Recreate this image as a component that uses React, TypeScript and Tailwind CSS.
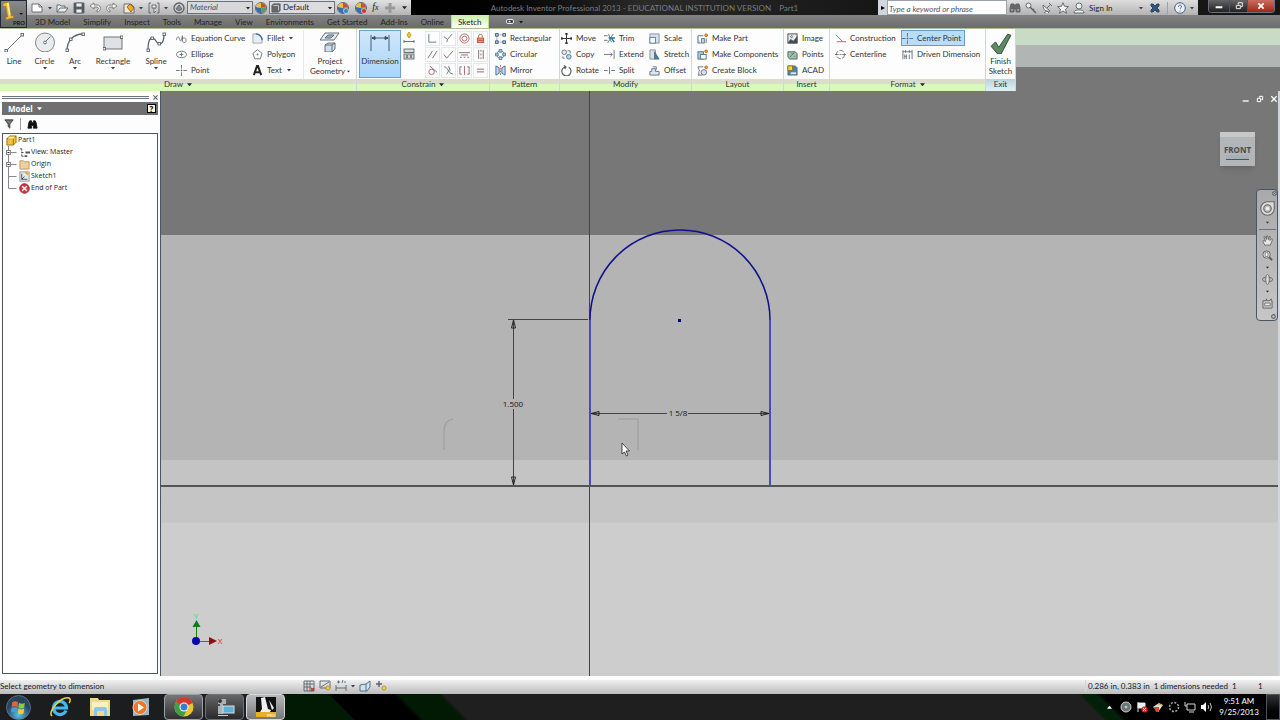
import React from 'react';

type IconProps = { children: React.ReactNode; className?: string; box?: string };

const Svg = ({ children, className = 'w-3 h-3', box = '0 0 12 12' }: IconProps) => (
  <svg viewBox={box} className={`shrink-0 ${className}`} fill="none" stroke="#59636a" strokeWidth=".9" aria-hidden="true">
    {children}
  </svg>
);

const Caret = ({ className = 'w-1 h-1 text-gray-700' }: { className?: string }) => (
  <svg viewBox="0 0 4 4" className={`shrink-0 ${className}`} fill="currentColor" aria-hidden="true">
    <path d="M0 1h4L2 3.4z" />
  </svg>
);

const icons = {
  line: <><path d="M2 19 18 3" /><rect x="1" y="17.500" width="2.500" height="2.500" fill="#fff" /><rect x="17" y="1.500" width="2.500" height="2.500" fill="#fff" /></>,
  circle: <><circle cx="10" cy="10.500" r="9.500" fill="#e9ebed" stroke="#777" /><path d="m10 10 5.500-5.500" /><circle cx="10" cy="10.500" r="1.400" fill="#fff" /></>,
  arc: <><path d="M2 19C2 9 8 2 18 2" strokeWidth="1.300" /><rect x="1" y="17" width="2.500" height="2.500" fill="#fff" /><rect x="17" y="1" width="2.500" height="2.500" fill="#fff" /><rect x="4.500" y="6" width="2.500" height="2.500" fill="#fff" /></>,
  rectangle: <><rect x="1" y="5" width="18" height="12" fill="#dfe1e4" stroke="#666" /><rect x="0" y="15.500" width="2.500" height="2.500" fill="#fff" /><rect x="17.500" y="4" width="2.500" height="2.500" fill="#fff" /></>,
  spline: <><path d="M2 18C2 4 7 4 10 9s8 4 8-7" strokeWidth="1.300" /><rect x="1" y="17" width="2.500" height="2.500" fill="#fff" /><rect x="5" y="5" width="2.500" height="2.500" fill="#fff" /><rect x="12" y="10.500" width="2.500" height="2.500" fill="#fff" /><rect x="17" y="1" width="2.500" height="2.500" fill="#fff" /></>,
  project: <><path d="M5 1h14l-5 7H0z" fill="#e4edf2" /><path d="M8 3h6l-3 3H5z" fill="#8fb6cf" /><path d="m5 13 3-2h7v6l-3 3H5z" fill="#cfe0ea" /><path d="M5 13h7v7M12 13l3-2" /></>,
  dimension: <path d="M1 3v16M19 3v16M2 6h16M2 6l3-1.500v3zM18 6l-3-1.500v3z" stroke="#3a4a60" fill="#3a4a60" />,
  finish: <path d="m1 13 4-4 3 5 8-12 3 1L10 20H7z" fill="#5f8a66" stroke="#2f5037" />,
};

const smallIcons = {
  equation: <path d="M0 8c2-6 3-4 4-1s2 2 3-4v6c1 2 4 2 4-1s-2-3-4-2" />,
  ellipse: <><ellipse cx="6" cy="6" rx="5.500" ry="3.500" /><path d="M6 4v4M4 6h4" /></>,
  point: <path d="M6 0v4M6 8v4M0 6h4M8 6h4M5 6h2M6 5v2" />,
  fillet: <><path d="M1 1h4c4 0 6 3 6 6v4H1z" fill="#e8eef2" stroke="#99a" /><path d="M4 1c4 0 7 3 7 7" stroke="#2b6ea5" strokeWidth="1.300" /></>,
  polygon: <><path d="m6 .8 5 3.900-2 6H3l-2-6z" /><path d="M5.500 5.500h1v1h-1z" /></>,
  text: <path d="M2 11 5.500 1h1L10 11M4 8h4" stroke="#222" strokeWidth="2.200" />,
  coincident: <path d="M2 1v9h8" />,
  collinear: <path d="m1 4 4 3 5-6M5 7l-1 3" />,
  concentric: <><circle cx="6" cy="6" r="5" stroke="#a55" /><circle cx="6" cy="6" r="2.700" stroke="#a55" /></>,
  fix: <><rect x="2.500" y="5.500" width="7" height="5" fill="#e0a070" stroke="#b54a3a" /><path d="M4 5V3c0-2 4-2 4 0v2M3 8h6" stroke="#b54a3a" /></>,
  parallel: <path d="m1 10 5-8M6 10l5-8" stroke="#755" />,
  perpendicular: <path d="m1 6 3 4 7-8" stroke="#755" />,
  horizontal: <path d="M0 4h12M2 6.500h8M1 9h2M5 9h2M9 9h2" stroke="#755" />,
  vertical: <path d="M4 1v10M9 1v10M6.500 1v2M6.500 5v2M6.500 9v2" stroke="#755" />,
  tangent: <><circle cx="5" cy="7.500" r="3" stroke="#a55" /><path d="m3 1 8 7" /></>,
  smooth: <path d="M1 2c5 0 3 6 10 8M4 10l3-5M6 1l2 5" />,
  symmetric: <><path d="M3 2H1v8h2M9 2h2v8H9" stroke="#755" /><path d="M6 1v10" stroke="#a55" /></>,
  equal: <path d="M2 4.500h8M2 7.500h8" stroke="#755" />,
  autoDim: <><path d="M1 8v3M11 8v3M1 9.500h10" /><path d="m6 0 2 3-2 3-2-3z" fill="#f3c742" stroke="#c99200" /></>,
  showCon: <><rect x="1" y="1" width="10" height="3.500" fill="#ddd" /><rect x="1" y="6" width="10" height="5" fill="#ddd" /><path d="m3 7 2 3M5 7l-2 3M7 7l2 3M9 7l-2 3" /></>,
  rectangular: <><path d="M3 2h6M3 10h6M2 3v6" stroke="#557" strokeDasharray="1 1" /><path d="M.5.500h3v3h-3zM8.500.500h3v3h-3zM.5 8.500h3v3h-3zM8.500 8.500h3v3h-3z" fill="#b9cddd" stroke="#2d4d6b" /></>,
  circular: <><circle cx="6" cy="6" r="4" stroke="#789" /><path d="M4.500.500h3v3h-3zM4.500 8.500h3v3h-3zM.5 4.500h3v3h-3zM8.500 4.500h3v3h-3z" fill="#a8c4d8" stroke="#4d7893" /></>,
  mirror: <><path d="M6 0v12" stroke="#a55" strokeDasharray="2 1" /><path d="M1 1v10l3.500-2V3zM11 1v10L7.500 9V3z" fill="#c9dcea" stroke="#2d5d8b" /></>,
  move: <path d="M6 0v12M0 6h12M4.500 1.500 6 0l1.500 1.500M4.500 10.500 6 12l1.500-1.500M1.500 4.500 0 6l1.500 1.500M10.500 4.500 12 6l-1.500 1.500" stroke="#333" strokeWidth="1.100" />,
  copy: <><circle cx="3.500" cy="3.500" r="2.500" fill="#e4ecf2" /><circle cx="8.500" cy="8.500" r="2.500" fill="#bcd5e6" stroke="#2d6d9b" /><path d="M7 2h3v3M2 8v2h2" /></>,
  rotate: <path d="M4.500 2a5 5 0 1 0 4 .5M3 .5l2.500 1.500L4 4.500" strokeWidth="1.300" />,
  trim: <><path d="M0 3h4M0 8h4M4 11 10 1M5 1l3 9" /><path d="M5 5.500h7M8 5l3 5" stroke="#2576a8" strokeWidth="1.600" /></>,
  extend: <path d="M0 6h9M7 4l2 2-2 2M11 1v10" />,
  split: <path d="M0 6h4M6 2v8M8 6h4" />,
  scale: <><rect x="1" y="1" width="10" height="10" fill="#d4dfe8" stroke="#789" /><rect x="1" y="5" width="6" height="6" fill="#fff" stroke="#4d7893" /></>,
  stretch: <><path d="M1 1h6v10H1z" fill="#d8e2ea" stroke="#789" /><path d="M6 3v8h5z" fill="#4682ae" /></>,
  offset: <><path d="M1 11V7h2V4h4v3h4v4z" fill="#dbe6ee" stroke="#567" /><path d="M4 2h4v3" /></>,
  makePart: <><path d="M1 3h6M1 3v8h3M5 6h3v5H5z" fill="#cfe0ec" stroke="#467" /><path d="M10 6v5" stroke="#467" /><circle cx="10" cy="2.500" r="1.500" fill="#ef9a3c" stroke="#b56414" /></>,
  makeComp: <><rect x="1" y="3" width="6" height="8" fill="#a7cbe0" stroke="#467" /><rect x="4" y="6" width="6" height="5" fill="#fff" stroke="#467" /><circle cx="10" cy="2.500" r="1.500" fill="#ef9a3c" stroke="#b56414" /></>,
  block: <><path d="M1 2h6M1 2l2 5M1 11h5M2 7v4" /><circle cx="7.500" cy="8" r="3" fill="#dde" /><circle cx="10" cy="2.500" r="1.500" fill="#ef9a3c" stroke="#b56414" /></>,
  image: <><rect x="1" y="1" width="10" height="10" fill="#e7edf1" stroke="#333" /><path d="m1 11 3-4 3 2 4-5v7z" fill="#444" /><circle cx="5" cy="4" r="1" /></>,
  points: <><path d="M1 3h8l2 2v6H3L1 9z" fill="#9fc0ae" stroke="#3e5d50" /><path d="m3 9 5-5M5 5h1M8 8h1" /></>,
  acad: <><path d="M1 1h8l2 2v8H1z" fill="#4f83a8" /><path d="M1 1h5v5H1z" fill="#f6d33b" stroke="#8a7410" /><path d="M4 8h6v2H4z" fill="#dfe8ee" stroke="none" /></>,
  construction: <><path d="m1 2 7 7" stroke="#b45" /><path d="M2 9.500h10" stroke="#b45" /></>,
  centerline: <><circle cx="6" cy="6" r="4.500" strokeDasharray="5 1.500" /><path d="M0 6h4M8 6h4M5 6h2" /></>,
  driven: <path d="M1 1v10M11 1v10M1 3h10M3 6v5M5 6v5M8 6v5M3 8h2M4 1v3M8 1v3" />,
};

const LargeButton = ({ icon, label, width, arrow }: { icon: React.ReactNode; label: string; width: string; arrow?: boolean }) => (
  <button type="button" className={`flex flex-col items-center pt-0.5 ${width}`}>
    <Svg className="w-5 h-5" box="0 0 20 20">{icon}</Svg>
    <span className="mt-1 leading-[10px]">{label}</span>
    {arrow && <Caret className="w-1 h-1 text-gray-700" />}
  </button>
);

type Item = { icon: React.ReactNode; label: string; arrow?: boolean; active?: boolean };

const ItemColumn = ({ items, width }: { items: Item[]; width: string }) => (
  <div className={`flex flex-col ${width}`}>
    {items.map((item) => (
      <button
        key={item.label}
        type="button"
        className={`flex h-4 items-center gap-1 whitespace-nowrap px-px ${item.active ? 'bg-[#b9dcf8] pr-1 outline outline-1 -outline-offset-1 outline-[#6b9cc8]' : ''}`}
      >
        <Svg className="w-[11px] h-[11px]">{item.icon}</Svg>
        <span>{item.label}</span>
        {item.arrow && <Caret className="w-1 h-1 ml-px text-gray-700" />}
      </button>
    ))}
  </div>
);

const Panel = ({ title, arrow, children, width, exit }: { title: string; arrow?: boolean; children: React.ReactNode; width: string; exit?: boolean }) => (
  <section className={`flex shrink-0 flex-col border-r border-gray-300 bg-[#fdfdfd] ${width}`}>
    <div className="flex h-[50px] pt-px">{children}</div>
    <div className={`flex h-3 items-start justify-center gap-1 leading-[11px] ${exit ? 'bg-linear-to-b from-[#b9d3dc] to-[#e0f2f6]' : 'bg-[linear-gradient(#dcdccb_5px,#d8fab9_5px)]'}`}>
      <h2>{title}</h2>
      {arrow && <Caret className="mt-[3px] w-[5px] h-[5px] text-gray-800" />}
    </div>
  </section>
);

const constraints: [string, React.ReactNode][] = [
  ['Coincident', smallIcons.coincident], ['Collinear', smallIcons.collinear], ['Concentric', smallIcons.concentric], ['Fix', smallIcons.fix],
  ['Parallel', smallIcons.parallel], ['Perpendicular', smallIcons.perpendicular], ['Horizontal', smallIcons.horizontal], ['Vertical', smallIcons.vertical],
  ['Tangent', smallIcons.tangent], ['Smooth', smallIcons.smooth], ['Symmetric', smallIcons.symmetric], ['Equal', smallIcons.equal],
];

const Ribbon = () => (
  <div className="flex h-[63px] shrink-0 border-t border-[#a9bf99] bg-[linear-gradient(#c9dac6_16px,#b1b5b4_16px,#b1b5b4_38px,#777_38px)] text-[#333]">
    <Panel title="Draw" arrow width="w-[357px]">
      <LargeButton icon={icons.line} label="Line" width="w-7" />
      <LargeButton icon={icons.circle} label="Circle" width="w-[33px]" arrow />
      <LargeButton icon={icons.arc} label="Arc" width="w-7" arrow />
      <LargeButton icon={icons.rectangle} label="Rectangle" width="w-12" arrow />
      <LargeButton icon={icons.spline} label="Spline" width="w-[38px]" arrow />
      <ItemColumn
        width="w-[76px]"
        items={[
          { icon: smallIcons.equation, label: 'Equation Curve' },
          { icon: smallIcons.ellipse, label: 'Ellipse' },
          { icon: smallIcons.point, label: 'Point' },
        ]}
      />
      <ItemColumn
        width="w-[52px]"
        items={[
          { icon: smallIcons.fillet, label: 'Fillet', arrow: true },
          { icon: smallIcons.polygon, label: 'Polygon' },
          { icon: smallIcons.text, label: 'Text', arrow: true },
        ]}
      />
      <button type="button" className="flex flex-1 flex-col items-center border-l border-gray-200 pt-0.5">
        <Svg className="w-5 h-5" box="0 0 20 20">{icons.project}</Svg>
        <span className="mt-1 leading-[10px]">Project</span>
        <span className="flex items-center gap-0.5 leading-[10px]">Geometry<Caret className="w-[3px] h-[3px]" /></span>
      </button>
    </Panel>
    <Panel title="Constrain" arrow width="w-[133px]">
      <button type="button" className="ml-0.5 flex h-12 w-[42px] flex-col items-center border border-[#6fa0cb] bg-linear-to-b from-[#cfe6fa] to-[#a9d6fb] pt-px">
        <Svg className="w-6 h-5" box="0 0 20 20">{icons.dimension}</Svg>
        <span className="mt-1 leading-[10px]">Dimension</span>
      </button>
      <div className="ml-0.5 flex w-[21px] flex-col gap-1 pt-0.5">
        <button type="button" aria-label="Automatic dimensions" className="w-3"><Svg>{smallIcons.autoDim}</Svg></button>
        <button type="button" aria-label="Show constraints" className="w-3"><Svg>{smallIcons.showCon}</Svg></button>
      </div>
      <div className="grid grid-cols-4">
        {constraints.map(([name, icon]) => (
          <button key={name} type="button" aria-label={name} className="flex h-4 w-4 items-center justify-center">
            <span className="flex h-[15px] w-[15px] items-center justify-center border border-gray-200"><Svg className="w-[11px] h-[11px]">{icon}</Svg></span>
          </button>
        ))}
      </div>
    </Panel>
    <Panel title="Pattern" width="w-[70px]">
      <ItemColumn
        width="ml-1"
        items={[
          { icon: smallIcons.rectangular, label: 'Rectangular' },
          { icon: smallIcons.circular, label: 'Circular' },
          { icon: smallIcons.mirror, label: 'Mirror' },
        ]}
      />
    </Panel>
    <Panel title="Modify" width="w-[132px]">
      <ItemColumn
        width="w-[43px]"
        items={[
          { icon: smallIcons.move, label: 'Move' },
          { icon: smallIcons.copy, label: 'Copy' },
          { icon: smallIcons.rotate, label: 'Rotate' },
        ]}
      />
      <ItemColumn
        width="w-[45px]"
        items={[
          { icon: smallIcons.trim, label: 'Trim' },
          { icon: smallIcons.extend, label: 'Extend' },
          { icon: smallIcons.split, label: 'Split' },
        ]}
      />
      <ItemColumn
        width="flex-1"
        items={[
          { icon: smallIcons.scale, label: 'Scale' },
          { icon: smallIcons.stretch, label: 'Stretch' },
          { icon: smallIcons.offset, label: 'Offset' },
        ]}
      />
    </Panel>
    <Panel title="Layout" width="w-[92px]">
      <ItemColumn
        width="ml-1"
        items={[
          { icon: smallIcons.makePart, label: 'Make Part' },
          { icon: smallIcons.makeComp, label: 'Make Components' },
          { icon: smallIcons.block, label: 'Create Block' },
        ]}
      />
    </Panel>
    <Panel title="Insert" width="w-[46px]">
      <ItemColumn
        width="ml-0.5"
        items={[
          { icon: smallIcons.image, label: 'Image' },
          { icon: smallIcons.points, label: 'Points' },
          { icon: smallIcons.acad, label: 'ACAD' },
        ]}
      />
    </Panel>
    <Panel title="Format" arrow width="w-[156px]">
      <ItemColumn
        width="ml-1 w-[67px]"
        items={[
          { icon: smallIcons.construction, label: 'Construction' },
          { icon: smallIcons.centerline, label: 'Centerline' },
        ]}
      />
      <ItemColumn
        width="items-start"
        items={[
          { icon: smallIcons.point, label: 'Center Point', active: true },
          { icon: smallIcons.driven, label: 'Driven Dimension' },
        ]}
      />
    </Panel>
    <Panel title="Exit" width="w-[30px]" exit>
      <button type="button" className="flex flex-1 flex-col items-center pt-0.5">
        <Svg className="w-[22px] h-[22px]" box="0 0 20 20">{icons.finish}</Svg>
        <span className="mt-0.5 leading-[10px]">Finish</span>
        <span className="leading-[10px]">Sketch</span>
      </button>
    </Panel>
  </div>
);

const tabs = ['3D Model', 'Simplify', 'Inspect', 'Tools', 'Manage', 'View', 'Environments', 'Get Started', 'Add-Ins', 'Online', 'Sketch'];

const ColorWheel = ({ mark }: { mark?: string }) => (
  <Svg>
    <circle cx="6" cy="6" r="5.500" fill="#e8e2d0" stroke="#556" />
    <path d="M6 6 1 4a5 5 0 0 1 5-3z" fill="#e2c23a" stroke="none" />
    <path d="M6 6V1a5 5 0 0 1 5 4z" fill="#c94d3f" stroke="none" />
    <path d="m6 6 5-1a5 5 0 0 1-4 6z" fill="#57a05a" stroke="none" />
    <path d="m6 6 1 5a5 5 0 0 1-6-6z" fill="#3b6cb3" stroke="none" />
    {mark && <circle cx="9" cy="9" r="2.500" fill={mark} stroke="#fff" strokeWidth=".5" />}
  </Svg>
);

const QuickAccess = () => (
  <div className="flex h-[15px] w-[384px] shrink-0 items-center bg-linear-to-b from-[#e2e2e2] to-[#b4b4b4] pl-1">
    <div className="flex w-[156px] shrink-0 items-center justify-between pr-0.5">
      <button type="button" aria-label="New"><Svg><path d="M1 2h7l3 3v5H1z" fill="#fff" /><path d="M8 2v3h3" /></Svg></button>
      <Caret />
      <button type="button" aria-label="Open"><Svg><path d="M1 10V3h3l1 1h4v2M1 10l3-4h8l-3 4z" fill="#eee" /></Svg></button>
      <button type="button" aria-label="Save"><Svg><path d="M1 1h10v10H1z" fill="#555" /><path d="M3 1h6v4H3zM3 7h6v4H3z" fill="#eee" /></Svg></button>
      <button type="button" aria-label="Undo"><Svg><path d="M5 1 1 4l4 3V5h3c2 0 2 3 0 3v2c4 0 5-7 0-7H5z" fill="#f5f5f5" stroke="#777" /></Svg></button>
      <button type="button" aria-label="Redo"><Svg><path d="m7 1 4 3-4 3V5H4c-2 0-2 3 0 3v2c-4 0-5-7 0-7h3z" fill="#f5f5f5" stroke="#777" /></Svg></button>
      <button type="button" aria-label="Update"><Svg><path d="M1 2h7l3 3v6H1z" fill="#f2ead4" /><path d="m4 5 3-3 4 4-3 4z" fill="#f0a830" stroke="#9a5e10" /></Svg></button>
      <Caret />
      <button type="button" aria-label="Select"><Svg><path d="M3 1H1v10h2M9 1h2v10H9" /><path d="M4 3h4v3H4zM6 6v5l2-2" fill="#eee" /></Svg></button>
      <Caret />
      <button type="button" aria-label="Settings"><Svg><circle cx="6" cy="6" r="5" fill="#ccc" strokeWidth="1.300" /><path d="m3 7 3-4 3 4-3 2z" fill="#888" /></Svg></button>
    </div>
    <div className="relative flex h-[13px] w-[66px] shrink-0 items-center border border-gray-500 bg-[#d8d8d8]">
      <select aria-label="Material" className="h-full w-full appearance-none pl-0.5 text-[8px] leading-[11px] italic text-gray-600">
        <option>Material</option>
      </select>
      <Caret className="pointer-events-none absolute right-0.5 w-1 h-1" />
    </div>
    <div className="ml-0.5"><ColorWheel /></div>
    <div className="relative ml-0.5 flex h-[13px] w-[66px] shrink-0 items-center border border-gray-500 bg-[#dcdcdc]">
      <Svg className="ml-px w-[10px] h-[10px]"><path d="m1 3 2-2h8v8l-2 2H1z" fill="#666" /><path d="M3 3h6v6" stroke="#ddd" /></Svg>
      <select aria-label="Appearance" className="h-full w-full appearance-none pl-0.5 text-[8px] leading-[11px]">
        <option>Default</option>
      </select>
      <Caret className="pointer-events-none absolute right-0.5 w-1 h-1" />
    </div>
    <div className="ml-0.5 flex w-[70px] items-center justify-between">
      <button type="button" aria-label="Adjust"><ColorWheel mark="#3b82c4" /></button>
      <button type="button" aria-label="Clear"><ColorWheel mark="#c33" /></button>
      <button type="button" aria-label="Parameters" className="font-['Liberation_Serif',serif] text-[10px] italic leading-3">f<span className="text-[8px]">x</span></button>
      <Svg><path d="M6 1v10M1 6h10" stroke="#999" strokeWidth="3" /></Svg>
      <Caret className="w-[5px] h-[5px]" />
    </div>
  </div>
);

const TitleRight = () => (
  <div className="flex h-[15px] w-[402px] shrink-0">
    <button type="button" aria-label="Collapse search" className="flex w-[9px] items-center justify-center bg-gray-300">
      <svg viewBox="0 0 4 4" className="h-1.5 w-1"><path d="M0 0v4l4-2z" /></svg>
    </button>
    <input aria-label="Search" placeholder="Type a keyword or phrase" className="w-[120px] border border-gray-400 bg-white px-px pt-0.5 text-[8px] italic placeholder:text-gray-600" />
    <div className="flex w-[191px] items-center gap-1 bg-linear-to-b from-[#dedede] to-[#b3b3b3] pl-0.5 pr-1">
      <Svg><path d="M1 10V6l1-4h3l1 3 1-3h3l1 4v4H7V7H5v3z" fill="#666" /><path d="M3 7v2M9 7v2" stroke="#ddd" /></Svg>
      <Svg><circle cx="3.500" cy="3.500" r="2.500" fill="#eee" /><path d="m5 5 6 6M8 8l1-1" strokeWidth="1.500" /></Svg>
      <Svg><path d="M2 3c0 5 3 7 7 6zM6 6l4-4M3 11l3-2 2 2M8 1l3 3" fill="#eee" /></Svg>
      <Svg><path d="m6 .7 1.500 3.600 4 .3-3 2.600 1 4L6 9l-3.500 2.200 1-4-3-2.600 4-.3z" fill="#f4f4f4" /></Svg>
      <Svg><circle cx="6" cy="4" r="3" fill="#eee" /><path d="M1 11c0-3 3-3 5-3s5 0 5 3z" fill="#eee" /></Svg>
      <button type="button" className="whitespace-nowrap">Sign In</button>
      <span className="flex-1" />
      <Caret />
      <Svg className="ml-0.5 w-3 h-3"><path d="M2 2h2l2 2 2-2h2v2L8 6l2 2v2H8L6 8l-2 2H2V8l2-2-2-2z" fill="#35547d" stroke="#243b5c" /></Svg>
      <span className="mx-0.5 h-3 border-l border-gray-400" />
      <Svg><circle cx="6" cy="6" r="5.300" fill="#eef2f8" stroke="#35547d" /><path d="M4.500 5c0-3 3.500-2 3 0-.3 1-1.500 1-1.500 2M6 8.500v1" stroke="#35547d" /></Svg>
      <Caret />
    </div>
    <div className="ml-2.5 flex h-[13px] w-[67px] overflow-hidden rounded-b border border-t-0 border-gray-500">
      <button type="button" aria-label="Minimize" className="flex w-[20px] items-center justify-center bg-linear-to-b from-[#666] to-[#222]"><Svg className="w-2 h-2"><path d="M1 8h10" stroke="#fff" strokeWidth="3" /></Svg></button>
      <button type="button" aria-label="Restore" className="flex w-[18px] items-center justify-center border-l border-gray-600 bg-linear-to-b from-[#666] to-[#222]"><Svg className="w-2 h-2"><path d="M2 5h6v5H2zM5 4V1h6v6H9" stroke="#eee" strokeWidth="1.500" /></Svg></button>
      <button type="button" aria-label="Close" className="flex flex-1 items-center justify-center border-l border-gray-600 bg-linear-to-b from-[#c76d60] to-[#a32214]"><Svg className="w-2 h-2"><path d="m2 2 8 8M10 2l-8 8" stroke="#fff" strokeWidth="2.500" /></Svg></button>
    </div>
  </div>
);

const Header = () => (
  <header className="flex h-7 shrink-0 bg-[#737373]">
    <button type="button" aria-label="Application menu" className="flex w-[27px] items-end justify-end border border-gray-800 bg-linear-to-b from-[#8a8a8a] to-[#666]">
      <svg viewBox="0 0 26 26" className="h-[26px] w-[26px]">
        <path d="m2 2 6-1.500L10.500 15l2.500-.5v2.500l-8 2v-2.500l2-.5L5 5 2.500 5.500z" fill="#f0bd3c" stroke="#a87812" strokeWidth=".6" />
        <path d="m6 2 2-1 2 13-1.500.5z" fill="#fbe7a0" />
        <path d="M19 12h4l-2 2z" fill="#111" />
        <text x="12.500" y="24.500" fontSize="6" fontWeight="700" fill="#151515">PRO</text>
      </svg>
    </button>
    <div className="flex min-w-0 flex-1 flex-col">
      <div className="flex h-[15px] bg-[#161616]">
        <QuickAccess />
        <h1 className="flex min-w-0 flex-1 items-center justify-center overflow-hidden whitespace-pre bg-linear-to-r from-black via-[#2a2a2a] to-[#161616] text-[#7c7c7c]">
          {'Autodesk Inventor Professional 2013 - EDUCATIONAL INSTITUTION VERSION    Part1'}
        </h1>
        <TitleRight />
      </div>
      <nav className="flex h-[13px] items-center gap-px bg-linear-to-b from-[#828282] to-[#6c6c6c] pl-0.5">
        {tabs.map((tab) => (
          <button
            key={tab}
            type="button"
            className={`h-full px-1.5 leading-3 whitespace-nowrap ${tab === 'Sketch' ? 'border-x border-[#b8e08e] bg-linear-to-b from-[#c9f0a4] to-white' : ''}`}
          >
            {tab}
          </button>
        ))}
        <span className="ml-4 flex h-[5px] w-2 items-center justify-center rounded-xs border border-gray-200 bg-gray-700"><Caret className="h-[3px] w-[3px] rotate-180 text-white" /></span>
        <Caret className="ml-1 w-1 h-1 text-gray-900" />
      </nav>
    </div>
  </header>
);

const treeItems = [
  {
    label: 'View: Master', expand: true,
    icon: <><path d="M1 2h3M3 2v8M3 6h3M3 10h3" stroke="#333" strokeDasharray="2 1" /><path d="M7 5h5v2H7zM6 9h3v2H6z" fill="#555" stroke="none" /></>,
  },
  { label: 'Origin', expand: true, icon: <path d="M1 3V2h4l1 1h5v8H1z" fill="#edcfa0" stroke="#b98d58" /> },
  { label: 'Sketch1', icon: <><rect x="1" y="1" width="10" height="10" fill="#e8e8e8" stroke="#888" /><path d="M3 3v6h6M3 9l3-3" stroke="#223a5c" /><path d="m7 2 2 2 1-1-2-2z" fill="#f0b429" stroke="#d99a10" /></> },
  { label: 'End of Part', last: true, icon: <><circle cx="6" cy="6" r="5.200" fill="#cf3a45" stroke="#8e1822" /><path d="m3.500 3.500 5 5M8.500 3.500l-5 5" stroke="#fff" strokeWidth="1.500" /></> },
];

const ModelPanel = () => (
  <aside className="flex w-[161px] shrink-0 flex-col border-r border-gray-600 bg-[#fdfdfd] px-0.5 pb-0.5">
    <div className="flex h-[11px] items-center gap-1 pt-px">
      <span className="h-[3px] flex-1 border-y border-gray-500" />
      <button type="button" aria-label="Close panel"><Svg className="w-[5px] h-[5px]"><path d="m1 1 10 10M11 1 1 11" strokeWidth="2.500" /></Svg></button>
    </div>
    <div className="flex h-[13px] items-center gap-1 bg-[#707070] pl-1.5 pr-0.5 font-['Open_Sans',sans-serif] font-bold text-white">
      <h2>Model</h2>
      <Caret className="w-[5px] h-[5px]" />
      <button type="button" aria-label="Help" className="ml-auto flex h-[9px] w-[9px] items-center justify-center border border-black bg-[#fffbe0] text-[8px] leading-none text-black">?</button>
    </div>
    <div className="flex h-[18px] items-center gap-1.5 pl-0.5">
      <button type="button" aria-label="Filter"><Svg className="w-[10px] h-[10px]"><path d="M1 1h10L7 6v5L5 9V6z" fill="#777" stroke="#222" /></Svg></button>
      <span className="h-3 border-l border-gray-400" />
      <button type="button" aria-label="Find"><Svg className="w-[11px] h-[11px]"><path d="m1 10 1-6 1-2h2v2h2V2h2l1 2 1 6H7V7H5v3z" fill="#111" stroke="#111" /></Svg></button>
    </div>
    <ul className="flex-1 border border-gray-600 bg-white pl-0.5 font-['Open_Sans','Noto_Sans',sans-serif] text-[7px]">
      <li className="flex h-3 items-center gap-px">
        <Svg className="ml-px h-[11px] w-[11px]"><path d="m1 4 3-3h7v7l-3 3H1z" fill="#f5c23a" stroke="#8a640c" /><path d="M1 4h7v7M8 4l3-3" stroke="#8a640c" /><path d="m2 4 2-2h6L8 4z" fill="#fdeeb0" stroke="none" /></Svg>
        Part1
      </li>
      {treeItems.map((item) => (
        <li key={item.label} className="flex h-3 items-center gap-px">
          <svg viewBox="0 0 13 12" className="h-3 w-[13px] shrink-0" fill="none" stroke="#888">
            <path d={item.last ? 'M3.500 0v6.500h8' : 'M3.500 0v12M3.500 6.500h8'} />
            {item.expand && <><rect x="1.500" y="4.500" width="4" height="4" fill="#fff" stroke="#888" /><path d="M2.500 6.500h2" stroke="#222" /></>}
          </svg>
          <Svg className="h-[11px] w-[11px]">{item.icon}</Svg>
          {item.label}
        </li>
      ))}
    </ul>
  </aside>
);

const Drawing = () => (
  <svg className="h-full w-full font-['Open_Sans','Noto_Sans',sans-serif]" fill="none" stroke="#222" aria-label="Sketch geometry">
    <path d="M428.500 0v600" stroke="#444" />
    <path d="M0 395h4000" stroke="#555" strokeWidth="2" />
    {/* arched profile */}
    <path d="M429 394V229M609 394V229" stroke="#4a4ab8" strokeWidth="2" />
    <path d="M429 229a90 90 0 0 1 180 0" stroke="#10108c" strokeWidth="1.500" />
    <rect x="517" y="228" width="3" height="3" fill="#00008b" stroke="none" />
    {/* height dimension */}
    <path d="M347 228.500h80M352.500 229v79M352.500 318v76" stroke="#444" />
    <path d="M352.500 229l-2 8h4zM352.500 394l-2-8h4z" />
    <text x="352" y="316" fontSize="8" textAnchor="middle" fill="#111" stroke="none">1.500</text>
    {/* width dimension */}
    <path d="M430 322.500h76M527 322.500h81" stroke="#444" />
    <path d="M430 322.500l8-2v4zM608 322.500l-8-2v4z" />
    <text x="517" y="325" fontSize="8" textAnchor="middle" fill="#111" stroke="none">1 5/8</text>
    <path d="M283 359v-20q0-9 9-11M457 328h20v31" stroke="#a2a2a2" strokeWidth="1.500" />
    <path d="M461 352v11l2.500-2 2 4 1.500-1-2-4h3.500z" fill="#fff" strokeWidth=".8" />
    {/* axis triad */}
    <path d="M35.500 550v-20" stroke="#157a15" />
    <path d="M35 550.500h14" stroke="#c33" />
    <path d="M35.500 529l-4 7h8z" fill="#0c7d20" stroke="none" />
    <path d="M56 550l-8-4v8z" fill="#8c0f14" stroke="none" />
    <circle cx="35" cy="550" r="4" fill="#0808b0" stroke="none" />
    <text x="35" y="528" fontSize="8" textAnchor="middle" fill="#3be03b" stroke="none">Y</text>
    <text x="59" y="553" fontSize="8" textAnchor="middle" fill="#e02828" stroke="none">X</text>
  </svg>
);

const NavBar = () => (
  <div className="absolute right-0 top-[98px] flex h-[132px] w-[22px] flex-col items-center justify-between rounded-sm border border-gray-600 bg-linear-to-b from-[#a9a9a9] to-[#c6c6c6] py-px">
    <Svg className="h-[5px] w-[5px] self-end"><circle cx="6" cy="6" r="5" strokeWidth="2" /><path d="m3 3 6 6M9 3 3 9" strokeWidth="2" /></Svg>
    <button type="button" aria-label="Navigation wheel"><Svg className="h-[15px] w-[15px]"><path d="M6 .6h5.400V6A5.400 5.400 0 1 1 6 .6z" fill="#ddd" stroke="#666" /><circle cx="6" cy="6" r="3" fill="#bbb" stroke="#666" /><circle cx="6" cy="6" r="1.500" fill="#eee" stroke="none" /></Svg></button>
    <Caret className="h-[3px] w-[3px]" />
    <span className="w-[17px] border-t border-gray-500" />
    <button type="button" aria-label="Pan"><Svg className="h-[11px] w-[11px]"><path d="M3 11 .8 6.500 2 6l2 1L2 2l1-.5L5 5l0-4h1l1 4 1-3.500 1 .3L8.500 6 11 4l.6.8L9 11z" fill="#e6e6e6" stroke="#555" strokeWidth=".8" /></Svg></button>
    <button type="button" aria-label="Zoom"><Svg className="h-[11px] w-[11px]"><circle cx="5" cy="5" r="4" fill="#ddd" stroke="#555" /><path d="M3.500 3h3v4h-3z" fill="#fff" stroke="#555" strokeWidth=".7" /><path d="m8 8 3 3" stroke="#555" strokeWidth="2" /></Svg></button>
    <Caret className="h-[3px] w-[3px]" />
    <button type="button" aria-label="Orbit"><Svg className="h-[11px] w-[11px]"><ellipse cx="6" cy="6" rx="5.500" ry="2.300" stroke="#555" /><ellipse cx="6" cy="6" rx="2" ry="5.500" fill="#ddd" stroke="#555" /></Svg></button>
    <Caret className="h-[3px] w-[3px]" />
    <button type="button" aria-label="Look at"><Svg className="h-[11px] w-[11px]"><path d="M1 3h3l1-2v2h3l2-2v2h1v8H1z" fill="#ccc" stroke="#555" /><path d="M3 5.500h6v3H3z" fill="#eee" stroke="#666" /></Svg></button>
    <Svg className="mr-px h-[5px] w-[5px] self-end"><circle cx="6" cy="6" r="4.500" strokeWidth="2.500" /></Svg>
  </div>
);

const Canvas = () => (
  <main className="relative min-w-0 flex-1 overflow-hidden border-r-2 border-gray-300 bg-[linear-gradient(#777_144px,#b4b4b4_144px,#b4b4b4_369px,#c4c4c4_369px,#c5c5c5_431px,#cdcdcd_432px)]">
    <div className="absolute inset-0"><Drawing /></div>
    <div className="absolute right-0 top-1 flex gap-1.5">
      <button type="button" aria-label="Minimize document"><Svg className="h-2 w-2"><path d="M1 9h9" stroke="#fff" strokeWidth="2" /></Svg></button>
      <button type="button" aria-label="Restore document"><Svg className="h-2 w-2"><path d="M2 5h5v5H2zM5 4V2h5v5H8" stroke="#fff" strokeWidth="1.500" /></Svg></button>
      <button type="button" aria-label="Close document"><Svg className="h-2 w-2"><path d="m2 2 8 8M10 2l-8 8" stroke="#fff" strokeWidth="2" /></Svg></button>
    </div>
    <button type="button" className="absolute right-[23px] top-[41px] flex h-[34px] w-[35px] flex-col items-center border-t-[5px] border-[#c8c8c8] bg-[#b3b5b6] pt-2 font-['Open_Sans',sans-serif] text-[8px] font-bold leading-[10px] text-[#4b4b4b] shadow-md">
      FRONT
      <span className="h-[5px] w-[23px] border-b border-gray-600 bg-[#a8b0b5]" />
    </button>
    <NavBar />
  </main>
);

const StatusBar = () => (
  <footer className="flex h-[18px] shrink-0 items-start border-t-4 border-white bg-linear-to-b from-[#f0f0f0] to-[#bcbcbc] leading-3 text-gray-900">
    <span className="w-[303px]">Select geometry to dimension</span>
    <div className="flex items-center gap-1">
      <Svg><path d="M1 1h10v10H1zM1 4h10M1 7h7M4 1v10M7 1v10" /><path d="m8 8 3 3M11 8l-3 3" stroke="#c33" strokeWidth="1.500" /></Svg>
      <Svg><path d="M1 1h10v7H1zM2 7l8-5" /><circle cx="9" cy="8" r="2" fill="#f5cf4a" stroke="#b98d10" /></Svg>
      <Svg><path d="M1 5v6M11 5v6M1 8h10M2 2h3M3.500.500v3M7 3l1-3M9 2h2" /></Svg>
      <Caret />
      <Svg><path d="m1 5 6-1 4-3v6l-3 4H1z" fill="#cfe3ee" stroke="#467" /><path d="M7 4v7" stroke="#467" /></Svg>
      <Svg><path d="M4 1v6M1 4h6" strokeWidth="1.400" /><circle cx="9" cy="8" r="2" fill="#f5cf4a" stroke="#b98d10" /></Svg>
    </div>
    <div className="ml-auto flex whitespace-nowrap">
      <span className="border-l border-gray-300 pl-0.5">0.286 in, 0.383 in</span>
      <span className="ml-1 mr-1">1 dimensions needed</span>
      <span className="w-[26px]">1</span>
      <span className="w-[22px]">1</span>
    </div>
  </footer>
);

const Taskbar = () => (
  <div className="flex h-[26px] shrink-0 items-center bg-[linear-gradient(45deg,#1b1d1e_200px,#021a04_200px,#021a04_250px,#000_252px,#000_296px,#021a04_300px,#021a04_328px,#1f1f1f_332px,#1f1f1f_780px,#03200a_783px,#03200a_793px,#000_797px)] text-white">
    <button type="button" aria-label="Start" className="ml-1.5 w-[25px]">
      <svg viewBox="0 0 24 24" className="h-[25px] w-[25px]">
        <defs><radialGradient id="orb" cx=".5" cy=".8"><stop offset="0" stopColor="#5cc3e8" /><stop offset="1" stopColor="#27435f" /></radialGradient></defs>
        <circle cx="12" cy="12" r="11.500" fill="url(#orb)" stroke="#6d8495" strokeWidth=".7" />
        <path d="M6 7q3-2 5.500 0L11 11.500q-3-1.500-5.500 0z" fill="#e8622c" />
        <path d="M12.500 7.500q3 2 5.500 0l-.5 4.500q-3 2-5.500 0z" fill="#8fc93e" />
        <path d="M5.300 12.500q3-1.500 5.500 0l-.5 4.500q-3-2-5.500 0z" fill="#3fa3df" />
        <path d="M11.900 13q3 2 5.500 0l-.5 4.500q-3 2-5.500 0z" fill="#f8c931" />
      </svg>
    </button>
    <button type="button" aria-label="Internet Explorer" className="ml-[18px]">
      <svg viewBox="0 0 22 22" className="h-[22px] w-[22px]" fill="none">
        <path d="M17 14.500A6.500 6.500 0 1 1 17.500 12H6" stroke="#45b8ee" strokeWidth="3.200" />
        <path d="M3 20C-2 16 12 0 20 2c2 1 1 4 0 5" stroke="#f3cf3c" strokeWidth="1.500" />
      </svg>
    </button>
    <button type="button" aria-label="Explorer" className="ml-[18px]">
      <svg viewBox="0 0 22 22" className="h-[22px] w-[22px]"><path d="M1 4V2h8l1 2h11v16H1z" fill="#efda8c" /><path d="M3 6h16v8H3z" fill="#faf0c0" /><path d="M5 20v-7q0-2 2-2h9q2 0 2 2v7h-3v-5H8v5z" fill="#8fc6e2" /></svg>
    </button>
    <button type="button" aria-label="Media Player" className="ml-5">
      <svg viewBox="0 0 20 20" className="h-5 w-5"><path d="M2 3 18 1v17L2 19z" fill="#8db9d3" /><circle cx="9" cy="10.500" r="7" fill="#e8792d" stroke="#f8d0a8" /><path d="M7 6.500v8l6-4z" fill="#fff" /></svg>
    </button>
    <button type="button" aria-label="Chrome" className="ml-[13px] flex h-[26px] w-[39px] items-center justify-center rounded-sm border border-gray-400 bg-linear-to-b from-[#777] to-[#303030]">
      <svg viewBox="0 0 20 20" className="h-5 w-5">
        <circle cx="10" cy="10" r="9.500" fill="#e8c62e" />
        <path d="M10 10 1.800 5.200A9.500 9.500 0 0 1 18.800 6z" fill="#d8382c" />
        <path d="M10 10 1.800 5.200A9.500 9.500 0 0 0 9.500 19.500L14 11z" fill="#3f9e49" />
        <circle cx="10" cy="10" r="4.500" fill="#fff" /><circle cx="10" cy="10" r="3.500" fill="#3c7ccc" />
      </svg>
    </button>
    <button type="button" aria-label="Recorder" className="ml-0.5 flex h-[26px] w-[39px] items-center justify-center rounded-sm border border-gray-500 bg-linear-to-b from-[#666] to-[#2a2a2a]">
      <svg viewBox="0 0 20 20" className="h-5 w-5"><path d="M3 2h8v5H8v10H3V9h2V7H3z" fill="#aab3b8" /><circle cx="5" cy="4" r="2" fill="#333" /><rect x="8" y="9" width="11" height="7" fill="#5bb0da" stroke="#ddd" /><path d="M3 18h10v1H3z" fill="#ccc" /></svg>
    </button>
    <button type="button" aria-label="Inventor" className="ml-0.5 flex h-[26px] w-[39px] items-center justify-center rounded-sm border border-gray-300 bg-linear-to-b from-[#bbb] to-[#777]">
      <svg viewBox="0 0 20 20" className="h-5 w-5"><path d="M0 0h20v15H0z" fill="#111" /><path d="M0 15h20v5H0z" fill="#e8b023" /><path d="m5 1 4-1 3 12 3 1-1 2H4l2-3zM13 3l5 8-2 2z" fill="#eee" /><text x="11" y="19.500" fontSize="4" fill="#fff">PRO</text></svg>
    </button>
    <div className="ml-auto flex items-center gap-1">
      <Svg className="h-[5px] w-[5px] mr-1"><path d="M0 9 6 2l6 7z" fill="#fff" stroke="none" /></Svg>
      <Svg><circle cx="6" cy="6" r="5" fill="#6c7774" stroke="#ddd" /><circle cx="6" cy="6" r="2" fill="#bcc" /></Svg>
      <Svg><path d="M2 1v10M2 2h7v5H2z" stroke="#eee" fill="#eee" /><circle cx="8.500" cy="8.500" r="3" fill="#d22" stroke="none" /><path d="m7 7 3 3M10 7l-3 3" stroke="#fff" /></Svg>
      <Svg><path d="m1 6 6-4 4 2-5 7z" fill="#ddd" stroke="none" /><path d="M2 6h5v5H4z" fill="#d9472b" stroke="none" /><path d="m6 3 4 1" stroke="#d92" /></Svg>
      <Svg><circle cx="6" cy="6" r="4.500" stroke="#aaa" strokeWidth="1.500" strokeDasharray="2 1.500" /></Svg>
      <Svg><path d="M3 3h8v6H3zM1 1v4h2M5 11h5" stroke="#eee" /></Svg>
      <Svg><path d="M1 4h2l3-3v10L3 8H1z" fill="#fff" stroke="none" /><path d="M8 4q1.500 2 0 4M10 2q3 4 0 8" stroke="#ddd" /></Svg>
      <div className="w-[46px] text-center leading-[11px]">
        <div>9:51 AM</div>
        <div>9/25/2013</div>
      </div>
      <button type="button" aria-label="Show desktop" className="h-[26px] w-3.5 border border-gray-600 bg-linear-to-b from-[#333] to-black" />
    </div>
  </div>
);

export default function App() {
  return (
    <div className="flex h-screen w-full flex-col overflow-hidden bg-white font-['Lato','Open_Sans',sans-serif] text-[8px] text-[#222]">
      <Header />
      <Ribbon />
      <div className="flex min-h-0 flex-1">
        <ModelPanel />
        <Canvas />
      </div>
      <StatusBar />
      <Taskbar />
    </div>
  );
}
